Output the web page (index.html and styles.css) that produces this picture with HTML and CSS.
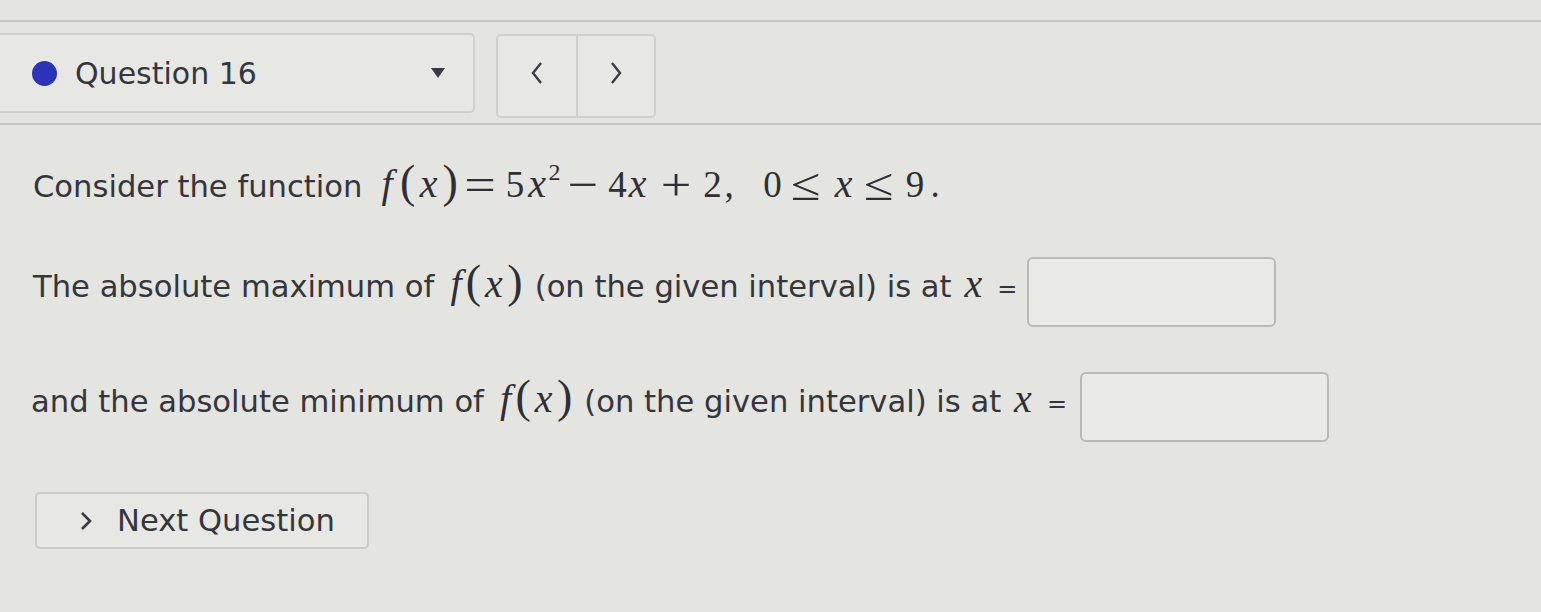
FILE: index.html
```html
<!DOCTYPE html>
<html>
<head>
<meta charset="utf-8">
<link rel="stylesheet" href="styles.css">
</head>
<body>
<div class="page">
  <div class="topline"></div>
  <div class="header">
    <div class="select">
      <span class="dot"></span>
      <span class="qlabel">Question 16</span>
      <span class="caret"></span>
    </div>
    <div class="nav">
      <div class="navbtn"><svg width="14" height="24" viewBox="0 0 14 24"><polyline points="11,2 3,12 11,22" fill="none" stroke="#3a3a42" stroke-width="2.4"/></svg></div>
      <div class="navbtn"><svg width="14" height="24" viewBox="0 0 14 24"><polyline points="3,2 11,12 3,22" fill="none" stroke="#3a3a42" stroke-width="2.4"/></svg></div>
    </div>
  </div>
  <div class="content">
    <div class="row r1">
      <div class="sentence">
        <span class="txt">Consider the function&nbsp;</span>
        <span class="formula">
          <span class="g w-f"><i>f</i></span>
          <span class="g w-p1 par">(</span>
          <span class="g w-x1"><i>x</i></span>
          <span class="g w-p2 par">)</span>
          <span class="g w-eq op"><span class="og eqg">=</span></span>
          <span class="g w-5">5</span>
          <span class="g w-x2"><i>x</i></span>
          <span class="gs w-sup"><span class="sup">2</span></span>
          <span class="g w-min op"><span class="og">&minus;</span></span>
          <span class="g w-4">4</span>
          <span class="g w-x3"><i>x</i></span>
          <span class="g w-plus op"><span class="og">+</span></span>
          <span class="g w-2">2</span>
          <span class="g w-com">,</span>
          <span class="g w-sp"></span>
          <span class="g w-0">0</span>
          <span class="g w-le1 op"><span class="og">&le;</span></span>
          <span class="g w-x4"><i>x</i></span>
          <span class="g w-le2 op"><span class="og">&le;</span></span>
          <span class="g w-9">9</span>
          <span class="g w-dot">.</span>
        </span>
      </div>
    </div>
    <div class="row r2">
      <div class="sentence">
        <span class="txt">The absolute maximum of&nbsp;</span>
        <span class="formula">
          <span class="g w-f2"><i>f</i></span>
          <span class="g w-p1 par">(</span>
          <span class="g w-x1b"><i>x</i></span>
          <span class="g w-p2b par">)</span>
        </span>
        <span class="txt">&nbsp;(on the given interval) is at&nbsp;</span>
        <span class="formula"><span class="g w-xs"><i>x</i></span></span>
        <span class="eqs">=</span>
      </div>
      <span class="inp"></span>
    </div>
    <div class="row r3">
      <div class="sentence">
        <span class="txt">and the absolute minimum of&nbsp;</span>
        <span class="formula">
          <span class="g w-f2"><i>f</i></span>
          <span class="g w-p1 par">(</span>
          <span class="g w-x1b"><i>x</i></span>
          <span class="g w-p2b par">)</span>
        </span>
        <span class="txt">&nbsp;(on the given interval) is at&nbsp;</span>
        <span class="formula"><span class="g w-xs"><i>x</i></span></span>
        <span class="eqs">=</span>
      </div>
      <span class="inp"></span>
    </div>
    <div class="nextbtn">
      <svg class="chev" width="14" height="22" viewBox="0 0 14 22"><polyline points="3,3 11,11 3,19" fill="none" stroke="#3a3a42" stroke-width="2.6"/></svg>
      <span>Next Question</span>
    </div>
  </div>
</div>
</body>
</html>
```
FILE: styles.css
```css
html, body {
  margin: 0;
  padding: 0;
  background: #e4e4e0;
}
.page {
  width: 1541px;
  height: 612px;
  overflow: hidden;
  font-family: "DejaVu Sans", Verdana, sans-serif;
  color: #35353c;
  padding-top: 20px;
  box-sizing: border-box;
}
.topline {
  height: 2px;
  background: #c4c4c0;
}
.header {
  display: flex;
  align-items: flex-start;
  gap: 21px;
  padding-top: 11px;
  height: 103px;
  box-sizing: border-box;
  border-bottom: 2px solid #c6c6c2;
}
.select {
  width: 475px;
  height: 80px;
  box-sizing: border-box;
  border: 2px solid #cfcfcb;
  border-left: none;
  border-radius: 0 5px 5px 0;
  background: #e7e7e3;
  display: flex;
  align-items: center;
  padding-left: 32px;
  padding-right: 28px;
}
.dot {
  width: 25px;
  height: 25px;
  border-radius: 50%;
  background: #2b34b8;
  margin-right: 18px;
}
.qlabel {
  font-size: 30px;
  flex: 1;
}
.caret {
  width: 0;
  height: 0;
  border-left: 7px solid transparent;
  border-right: 7px solid transparent;
  border-top: 10px solid #3a3a42;
}
.nav {
  display: flex;
  height: 80px;
  margin-top: 1px;
  border: 2px solid #cfcfcb;
  border-radius: 5px;
  background: #e7e7e3;
}
.navbtn {
  width: 78px;
  display: flex;
  align-items: center;
  justify-content: center;
  padding-bottom: 6px;
  box-sizing: border-box;
}
.navbtn + .navbtn {
  border-left: 2px solid #cfcfcb;
}
.content {
  padding-left: 33px;
}
.row {
  display: flex;
  align-items: center;
  height: 70px;
  white-space: nowrap;
  font-size: 30.6px;
}
.sentence {
  display: flex;
  align-items: baseline;
  padding-bottom: 22px;
}
.r1 { margin-top: 27px; }
.r2 { margin-top: 35px; }
.r3 { margin-top: 45px; margin-left: -2px; }
.r1 .sentence { padding-bottom: 12px; }
.formula {
  display: inline-flex;
  align-items: baseline;
  font-family: "Liberation Serif", "DejaVu Serif", serif;
  font-size: 37px;
  color: #2e2e34;
}
.g {
  display: flex;
  justify-content: center;
  align-items: baseline;
}
.gs {
  display: block;
  text-align: center;
}
.formula i { font-style: italic; font-size: 40px; }
.par { font-size: 46px; }
.op { font-size: 46px; }
.og {
  display: inline-block;
  transform: translateY(3px) scaleX(1.18);
}
.og.eqg {
  transform: translateY(3px) scaleX(1.22);
}
.sup {
  font-size: 24px;
  vertical-align: 17px;
}
.w-f { width: 30px; }
.w-p1 { width: 11px; }
.w-x1 { width: 31px; }
.w-p2 { width: 12px; }
.w-eq { width: 47px; }
.w-5 { width: 24px; }
.w-x2 { width: 20px; }
.w-sup { width: 15px; }
.w-min { width: 41px; }
.w-4 { width: 29px; }
.w-x3 { width: 11px; }
.w-plus { width: 66px; }
.w-2 { width: 7px; }
.w-com { width: 26px; }
.w-sp { width: 20px; }
.w-0 { width: 21px; }
.w-le1 { width: 46px; }
.w-x4 { width: 29px; }
.w-le2 { width: 42px; }
.w-9 { width: 30px; }
.w-dot { width: 10px; }
.w-f2 { width: 24px; }
.w-x1b { width: 30px; }
.w-p2b { width: 12px; }
.w-xs { width: 24px; }
.formula + .txt { margin-left: 4px; }
.eqs {
  font-size: 24px;
  margin-left: 12px;
}
.inp {
  display: block;
  width: 249px;
  height: 70px;
  box-sizing: border-box;
  border: 2px solid #b9b9b5;
  border-radius: 6px;
  background: #eaeae6;
  margin-left: 10px;
}
.r3 .inp { margin-left: 13px; }
.nextbtn {
  margin-top: 50px;
  margin-left: 2px;
  width: 334px;
  height: 57px;
  box-sizing: border-box;
  border: 2px solid #cbcbc7;
  border-radius: 5px;
  background: #e7e7e3;
  display: flex;
  align-items: center;
  padding-left: 42px;
  font-size: 30.6px;
}
.chev {
  margin-right: 24px;
}
```
